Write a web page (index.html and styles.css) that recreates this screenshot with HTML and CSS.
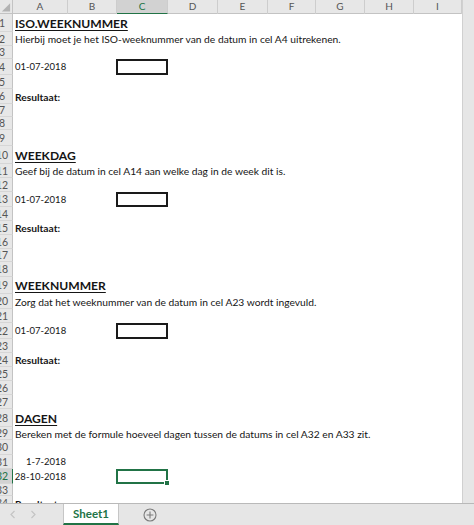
FILE: index.html
```html
<!DOCTYPE html>
<html>
<head>
<meta charset="utf-8">
<link rel="stylesheet" href="styles.css">
</head>
<body>
<div class="app">
  <div class="main">
    <div class="sheet">
      <div class="colhead">
        <div class="corner"><svg width="13" height="14" viewBox="0 0 13 14"><polygon points="11,3 11,12 2,12" fill="#b3b3b3"/></svg></div>
        <div class="ch">A</div><div class="ch">B</div><div class="ch sel">C</div><div class="ch">D</div><div class="ch">E</div><div class="ch">F</div><div class="ch">G</div><div class="ch">H</div><div class="ch">I</div>
      </div>
      <div class="rows">
        <div class="row h18"><div class="rh"><span>1</span></div><div class="txt head">ISO.WEEKNUMMER</div></div>
        <div class="row h14"><div class="rh"><span>2</span></div><div class="txt">Hierbij moet je het ISO-weeknummer van de datum in cel A4 uitrekenen.</div></div>
        <div class="row h13"><div class="rh"><span>3</span></div></div>
        <div class="row h16"><div class="rh"><span>4</span></div><div class="txt date">01-07-2018</div><div class="box"></div></div>
        <div class="row h14"><div class="rh"><span>5</span></div></div>
        <div class="row h15"><div class="rh"><span>6</span></div><div class="txt bold">Resultaat:</div></div>
        <div class="row h13"><div class="rh"><span>7</span></div></div>
        <div class="row h13"><div class="rh"><span>8</span></div></div>
        <div class="row h16"><div class="rh"><span>9</span></div></div>
        <div class="row h18"><div class="rh"><span>10</span></div><div class="txt head">WEEKDAG</div></div>
        <div class="row h14"><div class="rh"><span>11</span></div><div class="txt">Geef bij de datum in cel A14 aan welke dag in de week dit is.</div></div>
        <div class="row h14"><div class="rh"><span>12</span></div></div>
        <div class="row h15"><div class="rh"><span>13</span></div><div class="txt date">01-07-2018</div><div class="box"></div></div>
        <div class="row h14"><div class="rh"><span>14</span></div></div>
        <div class="row h14"><div class="rh"><span>15</span></div><div class="txt bold">Resultaat:</div></div>
        <div class="row h14"><div class="rh"><span>16</span></div></div>
        <div class="row h13"><div class="rh"><span>17</span></div></div>
        <div class="row h15"><div class="rh"><span>18</span></div></div>
        <div class="row h17"><div class="rh"><span>19</span></div><div class="txt head">WEEKNUMMER</div></div>
        <div class="row h15"><div class="rh"><span>20</span></div><div class="txt">Zorg dat het weeknummer van de datum in cel A23 wordt ingevuld.</div></div>
        <div class="row h14"><div class="rh"><span>21</span></div></div>
        <div class="row h16"><div class="rh"><span>22</span></div><div class="txt date">01-07-2018</div><div class="box"></div></div>
        <div class="row h14"><div class="rh"><span>23</span></div></div>
        <div class="row h14"><div class="rh"><span>24</span></div><div class="txt bold">Resultaat:</div></div>
        <div class="row h14"><div class="rh"><span>25</span></div></div>
        <div class="row h14"><div class="rh"><span>26</span></div></div>
        <div class="row h14"><div class="rh"><span>27</span></div></div>
        <div class="row h18"><div class="rh"><span>28</span></div><div class="txt head">DAGEN</div></div>
        <div class="row h13"><div class="rh"><span>29</span></div><div class="txt">Bereken met de formule hoeveel dagen tussen de datums in cel A32 en A33 zit.</div></div>
        <div class="row h15"><div class="rh"><span>30</span></div></div>
        <div class="row h14"><div class="rh"><span>31</span></div><div class="num">1-7-2018</div></div>
        <div class="row h15"><div class="rh selrow"><span>32</span></div><div class="num">28-10-2018</div><div class="box selbox"><i class="handle"></i></div></div>
        <div class="row h12"><div class="rh"><span>33</span></div></div>
        <div class="row h15"><div class="rh"><span>34</span></div><div class="txt bold">Resultaat:</div></div>
      </div>
    </div>
    <div class="vscroll"></div>
  </div>
  <div class="tabbar">
    <div class="nav">
      <svg width="8" height="9" viewBox="0 0 8 9"><polyline points="5.5,1 2,4.5 5.5,8" fill="none" stroke="#c4c4c4" stroke-width="1.2"/></svg>
      <svg width="8" height="9" viewBox="0 0 8 9"><polyline points="2.5,1 6,4.5 2.5,8" fill="none" stroke="#c4c4c4" stroke-width="1.2"/></svg>
    </div>
    <div class="tab">Sheet1</div>
    <div class="add"><svg width="14" height="14" viewBox="0 0 14 14"><circle cx="7" cy="7" r="6" fill="none" stroke="#7b7b7b" stroke-width="1.1"/><path d="M7 3.6V10.4M3.6 7H10.4" stroke="#7b7b7b" stroke-width="1.1"/></svg></div>
  </div>
</div>
</body>
</html>
```
FILE: styles.css
```css
html, body {
  margin: 0;
  padding: 0;
  background: #ffffff;
}
.app {
  width: 474px;
  height: 525px;
  overflow: hidden;
  display: flex;
  flex-direction: column;
  font-family: Lato, "Liberation Sans", sans-serif;
  color: #151515;
}
.main {
  display: flex;
  height: 503px;
  overflow: hidden;
}
.sheet {
  width: 462px;
  display: flex;
  flex-direction: column;
  overflow: hidden;
}
.colhead, .row {
  display: grid;
  grid-template-columns: 13px 55px 49px 51px 50px 50px 48px 49px 49px 48px;
}
.colhead {
  height: 14px;
  flex: none;
  background: #e7e7e7;
  border-bottom: 1px solid #c3c3c3;
  box-sizing: border-box;
}
.corner {
  border-right: 1px solid #c3c3c3;
  box-sizing: border-box;
  display: flex;
}
.ch {
  font-size: 10px;
  color: #555555;
  text-align: center;
  line-height: 13px;
  border-right: 1px solid #cdcdcd;
}
.ch.sel {
  background: #d2d2d2;
  color: #217346;
  border-bottom: 1px solid #217346;
}
.rows {
  flex: 1;
  overflow: hidden;
}
.row {
  align-items: center;
}
.h12 { height: 12px; }
.h13 { height: 13px; }
.h14 { height: 14px; }
.h15 { height: 15px; }
.h16 { height: 16px; }
.h17 { height: 17px; }
.h18 { height: 18px; }
.rh {
  grid-column: 1;
  grid-row: 1;
  align-self: stretch;
  background: #e7e7e7;
  border-right: 1px solid #c3c3c3;
  border-bottom: 1px solid #d6d6d6;
  box-sizing: border-box;
  overflow: hidden;
  display: flex;
  align-items: center;
  font-size: 10.5px;
  color: #555555;
}
.rh span {
  display: block;
  flex: none;
  width: 20px;
  margin-left: -8px;
  text-align: center;
}
.rh.selrow {
  background: #d2d2d2;
  color: #217346;
  border-right: 1px solid #217346;
}
.txt, .num {
  grid-row: 1;
  grid-column: 2 / -1;
  white-space: nowrap;
  font-size: 10.25px;
  line-height: 12px;
  padding-left: 2px;
}
.date {
  font-size: 9.5px;
}
.num {
  grid-column: 2;
  font-size: 9.5px;
  text-align: right;
  padding-left: 0;
  padding-right: 2px;
}
.bold {
  font-weight: 700;
}
.head {
  font-weight: 700;
  font-size: 12.1px;
  line-height: 15px;
  text-decoration: underline;
  text-decoration-thickness: 1px;
  text-underline-offset: 2px;
}
.box {
  grid-row: 1;
  grid-column: 4;
  align-self: stretch;
  border: 2px solid #1a1a1a;
  margin: 0 0 0 -1px;
  position: relative;
}
.selbox {
  border-color: #217346;
}
.handle {
  position: absolute;
  right: -4px;
  bottom: -4px;
  width: 4px;
  height: 4px;
  background: #217346;
  border: 1px solid #ffffff;
}
.vscroll {
  width: 12px;
  background: #e6e6e6;
  border-left: 1px solid #d0d0d0;
  box-sizing: border-box;
}
.tabbar {
  height: 22px;
  flex: none;
  display: flex;
  background: #e6e6e6;
  border-top: 1px solid #b9b9b9;
  box-sizing: border-box;
}
.nav {
  width: 63px;
  display: flex;
  align-items: center;
  gap: 12px;
  padding-left: 9px;
  box-sizing: border-box;
}
.tab {
  width: 56px;
  background: #ffffff;
  border-left: 1px solid #c6c6c6;
  border-right: 1px solid #c6c6c6;
  border-bottom: 2px solid #217346;
  box-sizing: border-box;
  color: #217346;
  font-weight: 700;
  font-size: 11.5px;
  text-align: center;
  line-height: 19px;
}
.add {
  display: flex;
  align-items: center;
  padding-left: 24px;
}
```
